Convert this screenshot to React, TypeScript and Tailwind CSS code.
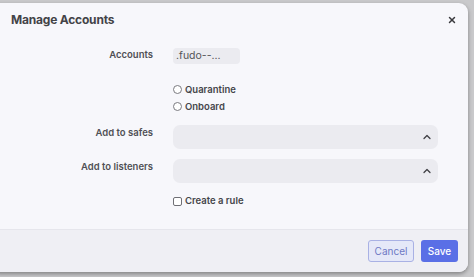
import { ChevronUp, X } from 'lucide-react'

interface SelectRowProps {
  label: string
}

function SelectRow({ label }: SelectRowProps) {
  return (
    <div className="grid grid-cols-[153px_1fr] gap-x-[20px] mt-[10px]">
      <div className="text-right text-[9.5px] font-semibold text-[#505055] pt-[1px] leading-[14px]">{label}</div>
      <div className="h-[24px] rounded-[7px] bg-[#ebebf0] flex items-center justify-end pr-[5px]">
        <ChevronUp className="w-[12px] h-[12px] text-[#3f3f44]" strokeWidth={2.5} />
      </div>
    </div>
  )
}

export default function App() {
  return (
    <div className="w-[474px] h-[277px] bg-[#c9c9cb] overflow-hidden pt-[3px] pr-[6px] pb-[5px] font-['Inter','Liberation_Sans',sans-serif] leading-none">
      <div className="-ml-[10px] h-full rounded-[9px] bg-[#f7f7fb] shadow-[0_2px_4px_rgba(0,0,0,0.35)] flex flex-col overflow-hidden">
        {/* Header */}
        <div className="h-[34px] flex items-center justify-between pl-[21px] pr-[11px]">
          <h2 className="text-[12px] font-bold text-[#434347] tracking-[-0.2px]">Manage Accounts</h2>
          <X className="w-[10px] h-[10px] text-[#3a3a3e]" strokeWidth={3.5} />
        </div>

        {/* Body */}
        <div className="flex-1 pl-[10px] pr-[30px]">
          <div className="grid grid-cols-[153px_1fr] gap-x-[20px] mt-[11px] items-center">
            <div className="text-right text-[9.5px] font-semibold text-[#505055] leading-[14px] -mt-[2px]">Accounts</div>
            <div className="flex">
              <span className="flex items-center h-[16px] w-[67px] rounded-[4px] bg-[#ebebf0] pl-[3px] text-[10.5px] text-[#555558]">
                .fudo--...
              </span>
            </div>
          </div>

          <div className="grid grid-cols-[153px_1fr] gap-x-[20px] mt-[17px]">
            <div />
            <div className="flex flex-col">
              {['Quarantine', 'Onboard'].map(opt => (
                <label key={opt} className="h-[17px] flex items-center gap-[3px] text-[9.5px] font-semibold text-[#45454a]">
                  <span className="w-[9px] h-[9px] rounded-full border border-[#7a7a80] bg-white" />
                  {opt}
                </label>
              ))}
            </div>
          </div>

          <SelectRow label="Add to safes" />
          <SelectRow label="Add to listeners" />

          <div className="grid grid-cols-[153px_1fr] gap-x-[20px] mt-[10px]">
            <div />
            <label className="h-[16px] flex items-center gap-[3px] text-[9.5px] font-semibold text-[#45454a]">
              <span className="w-[9px] h-[9px] rounded-[2px] border border-[#6f6f75] bg-white" />
              Create a rule
            </label>
          </div>
        </div>

        {/* Footer */}
        <div className="h-[43px] border-t border-[#e6e6ec] bg-[#efeff4] flex items-center justify-end gap-[7px] pr-[10px]">
          <button className="h-[22px] w-[46px] rounded-[3px] border border-[#a9b1e4] bg-[#e5e8f8] text-[10px] text-[#6e78c4]">
            Cancel
          </button>
          <button className="h-[22px] w-[37px] rounded-[3px] bg-[#5a6fe6] text-[10px] font-medium text-white">
            Save
          </button>
        </div>
      </div>
    </div>
  )
}
